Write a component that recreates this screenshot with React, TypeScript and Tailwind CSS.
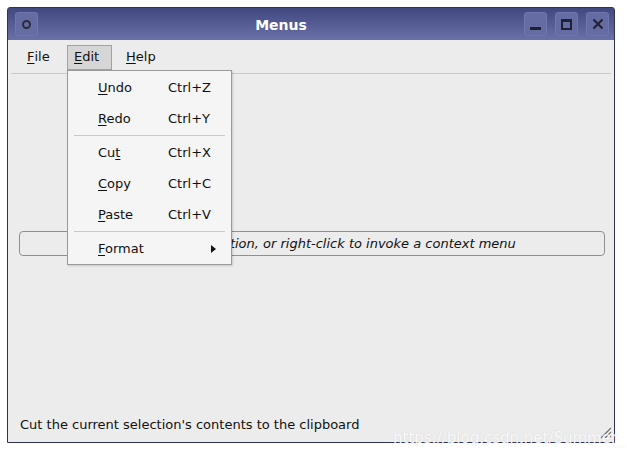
import React from "react";

const font = "font-['DejaVu_Sans',sans-serif]";

function U({ children }: { children: React.ReactNode }) {
    return <span className="underline underline-offset-[2px] decoration-1">{children}</span>;
}

const items = [
    { label: <><U>U</U>ndo</>, key: "Ctrl+Z" },
    { label: <><U>R</U>edo</>, key: "Ctrl+Y" },
    "sep",
    { label: <>Cu<U>t</U></>, key: "Ctrl+X" },
    { label: <><U>C</U>opy</>, key: "Ctrl+C" },
    { label: <><U>P</U>aste</>, key: "Ctrl+V" },
    "sep",
] as const;

function TitleButton({ children }: { children: React.ReactNode }) {
    return (
        <div className="flex h-[24px] w-[23px] items-center justify-center rounded-[3px] border border-[#7078ab] bg-[#656ca3]">
            {children}
        </div>
    );
}

export default function App() {
    return (
        <div className={`relative h-[455px] w-[627px] bg-white pl-[7px] pt-[7px] ${font}`}>
            <div className="flex h-[436px] w-[608px] flex-col rounded-t-[3px] border border-[#2f3456] bg-[#ececec]">
                {/* title bar */}
                <div className="flex h-[32px] items-center bg-linear-to-b from-[#414880] to-[#6a71a8] pl-[7px] pr-[5px]">
                    <TitleButton>
                        <div className="h-[9px] w-[9px] rounded-full border-2 border-[#2a2c3c]" />
                    </TitleButton>
                    <div className="flex-1 pt-[3px] text-center text-[14px] font-bold text-white">Menus</div>
                    <div className="flex gap-[8px]">
                        <TitleButton>
                            <div className="mt-[9px] h-[3px] w-[11px] bg-[#1f2030]" />
                        </TitleButton>
                        <TitleButton>
                            <div className="h-[11px] w-[11px] border-2 border-t-[3px] border-[#1f2030]" />
                        </TitleButton>
                        <TitleButton>
                            <svg width="12" height="12" viewBox="0 0 12 12">
                                <path d="M1.5 1.5 L10.5 10.5 M10.5 1.5 L1.5 10.5" stroke="#1f2030" strokeWidth="2" />
                            </svg>
                        </TitleButton>
                    </div>
                </div>

                {/* menu bar */}
                <div className="flex h-[33px] items-center pl-[12px] pt-[1px] text-[13px] text-[#111]">
                    <div className="flex h-[25px] w-[45px] items-center px-[7px]">
                        <U>F</U>ile
                    </div>
                    <div className="relative ml-[2px] flex h-[25px] w-[45px] items-center border border-[#a2a2a2] bg-[#d6d6d6] px-[6px]">
                        <U>E</U>dit
                        <div className="absolute left-[-1px] top-[24px] z-10 flex w-[165px] flex-col border border-[#9a9a9a] bg-[#f5f5f5] pt-[1px] shadow-[1px_1px_2px_rgba(0,0,0,0.15)]">
                            {items.map((it, i) =>
                                it === "sep" ? (
                                    <div key={i} className="flex h-[3px] items-center px-[6px]">
                                        <div className="h-px w-full bg-[#c9c9c9]" />
                                    </div>
                                ) : (
                                    <div key={i} className="flex h-[31px] items-center pt-[1px]">
                                        <span className="w-[100px] pl-[30px]">{it.label}</span>
                                        <span>{it.key}</span>
                                    </div>
                                )
                            )}
                            <div className="flex h-[31px] items-center pt-[1px]">
                                <span className="flex-1 pl-[30px]">
                                    <U>F</U>ormat
                                </span>
                                <svg width="5" height="8" viewBox="0 0 5 8" className="mr-[15px]">
                                    <path d="M0 0 L5 4 L0 8 Z" fill="#111" />
                                </svg>
                            </div>
                        </div>
                    </div>
                    <div className="ml-[7px] flex h-[25px] items-center px-[7px]">
                        <U>H</U>elp
                    </div>
                </div>
                <div className="mx-[3px] h-px bg-[#c9c9c9]" />

                {/* central area */}
                <div className="flex flex-1 flex-col justify-center pl-[11px] pr-[9px]">
                    <div className="flex h-[25px] items-center justify-center rounded-[4px] border border-[#8f8f8f] text-[13px] italic text-[#111]">
                        Choose a menu option, or right-click to invoke a context menu
                    </div>
                </div>

                {/* status bar */}
                <div className="relative flex h-[29px] items-center pb-[6px] pl-[12px] text-[13px] text-[#111]">
                    Cut the current selection's contents to the clipboard
                    <svg width="14" height="14" viewBox="0 0 14 14" className="absolute bottom-[3px] right-[2px]">
                        <path d="M13 3 L3 13 M13 7 L7 13 M13 11 L11 13" stroke="#6e6e6e" strokeWidth="1.2" />
                        <path d="M14 4 L4 14 M14 8 L8 14" stroke="#ffffff" strokeWidth="1" />
                    </svg>
                </div>
            </div>
            <div className="pointer-events-none absolute left-[393px] top-[427px] text-[15px] text-white/90 [text-shadow:0_0_1px_rgba(140,140,140,0.4)]">
                https://blog.csdn.net/Summer_
            </div>
        </div>
    );
}
